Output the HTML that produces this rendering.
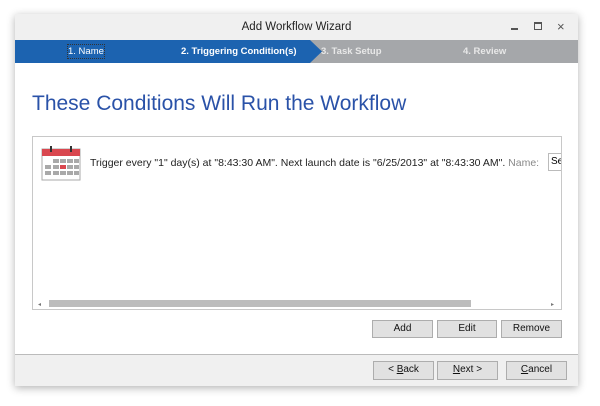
<!DOCTYPE html>
<html><head><style>
*{margin:0;padding:0;box-sizing:border-box}
body{width:600px;height:406px;background:#fff;font-family:"Liberation Sans",sans-serif;position:relative;overflow:hidden}
.win{position:absolute;left:15px;top:14px;width:563px;height:372px;background:#fff;box-shadow:0 2px 8px rgba(0,0,0,.3)}
.title{position:absolute;left:0;top:0;width:563px;height:26px;background:#f0f0f0;font-size:11.5px;color:#222;text-align:center;line-height:26px}
.steps{position:absolute;left:0;top:26px;width:563px;height:23px;background:#a5a7aa;font-size:9.5px;font-weight:bold;color:#fff;line-height:23px}
.s{position:absolute;top:0}
.abs{position:absolute}
.btn{position:absolute;height:18px;background:#e1e1e1;border:1px solid #adadad;font-size:10px;color:#111;text-align:center;line-height:16px}
</style></head><body>
<div class="win">
<div class="title">Add Workflow Wizard
<span class="abs" style="left:496px;top:14px;width:7px;height:2px;background:#555"></span>
<span class="abs" style="left:519px;top:8px;width:8px;height:8px;border:1px solid #555;border-top-width:2px"></span>
<span class="abs" style="left:542px;top:0;font-size:13px;color:#555">×</span>
</div>
<div class="steps">
<svg class="abs" style="left:0;top:0" width="310" height="23"><polygon points="0,0 295,0 307,11.5 295,23 0,23" fill="#1c63b0"/></svg>
<span class="s" style="left:52px;border:1px dotted #333;line-height:13px;top:4px;font-weight:normal">1. Name</span>
<span class="s" style="left:166px">2. Triggering Condition(s)</span>
<span class="s" style="left:306px;color:#e8e8e8">3. Task Setup</span>
<span class="s" style="left:448px;color:#e8e8e8">4. Review</span>
</div>
<div class="abs" style="left:17px;top:78px;font-size:21px;color:#2a52a8">These Conditions Will Run the Workflow</div>
<div class="abs" style="left:17px;top:122px;width:530px;height:174px;border:1px solid #c8c8c8;overflow:hidden">
<svg class="abs" style="left:8px;top:8px" width="40" height="36">
<rect x="1" y="4" width="38" height="31" fill="#fff" stroke="#aaa"/>
<rect x="1" y="4" width="38" height="7" fill="#d9474f"/>
<rect x="9" y="1" width="2" height="6" fill="#333"/><rect x="29" y="1" width="2" height="6" fill="#333"/>
<g fill="#a9a9a9">
<rect x="12" y="14" width="6" height="4"/><rect x="19" y="14" width="6" height="4"/><rect x="26" y="14" width="6" height="4"/><rect x="33" y="14" width="5" height="4"/>
<rect x="4" y="20" width="6" height="4"/><rect x="12" y="20" width="6" height="4"/><rect x="19" y="20" width="6" height="4" fill="#d9474f"/><rect x="26" y="20" width="6" height="4"/><rect x="33" y="20" width="5" height="4"/>
<rect x="4" y="26" width="6" height="4"/><rect x="12" y="26" width="6" height="4"/><rect x="19" y="26" width="6" height="4"/><rect x="26" y="26" width="6" height="4"/><rect x="33" y="26" width="5" height="4"/>
</g></svg>
<div class="abs" style="left:57px;top:20px;font-size:10.5px;color:#222;white-space:nowrap">Trigger every "1" day(s) at "8:43:30 AM". Next launch date is "6/25/2013" at "8:43:30 AM". <span style="color:#888">Name:</span></div>
<div class="abs" style="left:515px;top:16px;width:20px;height:18px;border:1px solid #bbb;font-size:10px;padding:2px">Se</div>
<div class="abs" style="left:5px;top:164px;font-size:6px;color:#777">◂</div>
<div class="abs" style="left:16px;top:163px;width:422px;height:7px;background:#bcbcbc"></div>
<div class="abs" style="left:518px;top:164px;font-size:6px;color:#777">▸</div>
</div>
<div class="btn" style="left:357px;top:306px;width:61px">Add</div>
<div class="btn" style="left:422px;top:306px;width:60px">Edit</div>
<div class="btn" style="left:486px;top:306px;width:61px">Remove</div>
<div class="abs" style="left:0;top:340px;width:563px;height:32px;background:#f0f0f0;border-top:1px solid #bbb"></div>
<div class="btn" style="left:358px;top:347px;width:61px;height:19px"><span>&lt; <u>B</u>ack</span></div>
<div class="btn" style="left:422px;top:347px;width:61px;height:19px"><u>N</u>ext &gt;</div>
<div class="btn" style="left:491px;top:347px;width:61px;height:19px"><u>C</u>ancel</div>
</div>
</body></html>
